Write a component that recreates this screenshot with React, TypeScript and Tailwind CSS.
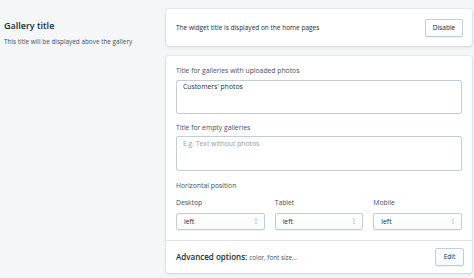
const font = { fontFamily: '"Open Sans", "Liberation Sans", sans-serif' }

function Select({ label }: { label: string }) {
  return (
    <div className="flex flex-col">
      <span className="text-[6.8px] text-[#454f5b] leading-none mb-[6px]">{label}</span>
      <div className="h-[17px] flex items-center justify-between px-[7px] rounded-[2px] border border-[#c4cdd5] bg-gradient-to-b from-white to-[#f9fafb] shadow-[0_1px_0_rgba(22,29,37,0.05)]">
        <span className="text-[6.8px] text-[#212b36]">left</span>
        <span className="text-[7px] text-[#637381] leading-none">⁝</span>
      </div>
    </div>
  )
}

export default function App() {
  return (
    <div style={font} className="w-[474px] h-[278px] bg-[#f4f6f8] text-[#212b36] flex overflow-hidden">
      {/* Left description */}
      <div className="w-[166px] shrink-0 pl-[4px] pt-[21px]">
        <h2 className="text-[9px] font-semibold leading-none">Gallery title</h2>
        <p className="text-[6.4px] text-[#454f5b] mt-[9px] leading-none">
          This title will be displayed above the gallery
        </p>
      </div>

      {/* Cards */}
      <div className="w-[306px] flex flex-col pt-[9px] gap-[10px]">
        <div className="h-[37px] bg-white rounded-[3px] shadow-[0_0_0_1px_rgba(63,63,68,0.05),0_1px_3px_0_rgba(63,63,68,0.15)] flex items-center justify-between pl-[10px] pr-[9px]">
          <span className="text-[6.5px] text-[#212b36]">The widget title is displayed on the home pages</span>
          <button className="h-[18px] w-[38px] rounded-[2px] border border-[#c4cdd5] bg-gradient-to-b from-white to-[#f9fafb] text-[6.6px] text-[#212b36] shadow-[0_1px_0_rgba(22,29,37,0.05)]">
            Disable
          </button>
        </div>

        <div className="h-[217px] bg-white rounded-[3px] shadow-[0_0_0_1px_rgba(63,63,68,0.05),0_1px_3px_0_rgba(63,63,68,0.15)] flex flex-col">
          <div className="px-[10px] pt-[12px] pb-[10px] flex flex-col">
            <label className="text-[6.8px] text-[#454f5b] leading-none">Title for galleries with uploaded photos</label>
            <div className="mt-[5px] h-[34px] rounded-[2px] border border-[#c4cdd5] px-[6px] pt-[3px] text-[6.8px] text-[#212b36] leading-none">
              Customers' photos
            </div>

            <label className="mt-[11px] text-[6.8px] text-[#454f5b] leading-none">Title for empty galleries</label>
            <div className="mt-[4px] h-[35px] rounded-[2px] border border-[#c4cdd5] px-[6px] pt-[4px] text-[6.8px] text-[#919eab] leading-none">
              E.g. Text without photos
            </div>

            <span className="mt-[12px] text-[6.8px] text-[#454f5b] leading-none">Horizontal position</span>

            <div className="mt-[11px] grid grid-cols-3 gap-[10px]">
              <Select label="Desktop" />
              <Select label="Tablet" />
              <Select label="Mobile" />
            </div>
          </div>

          <div className="border-t border-[#dfe3e8] flex-1 flex items-center justify-between pl-[10px] pr-[8px]">
            <span className="text-[8px] leading-none">
              <span className="font-semibold">Advanced options:</span>{' '}
              <span className="text-[6.3px] text-[#454f5b]">color, font size...</span>
            </span>
            <button className="h-[18px] w-[29px] rounded-[2px] border border-[#c4cdd5] bg-gradient-to-b from-white to-[#f9fafb] text-[6.6px] text-[#212b36] shadow-[0_1px_0_rgba(22,29,37,0.05)]">
              Edit
            </button>
          </div>
        </div>
      </div>
    </div>
  )
}
